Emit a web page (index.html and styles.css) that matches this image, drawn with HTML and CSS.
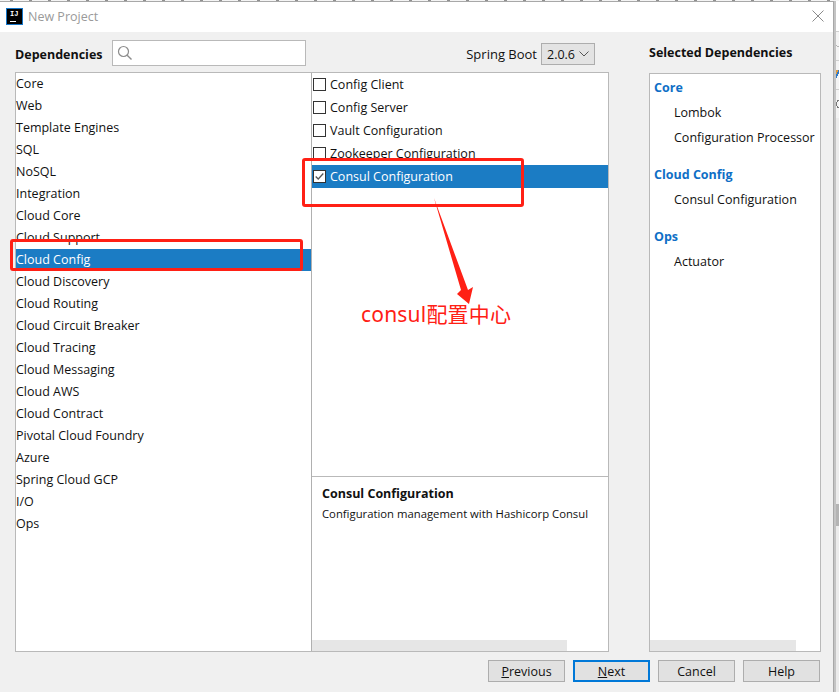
FILE: index.html
```html
<!DOCTYPE html>
<html lang="en">
<head>
<meta charset="utf-8">
<title>New Project</title>
<link rel="stylesheet" href="styles.css">
</head>
<body>
<div class="page">
  <div class="backdrop-top"></div>
  <div class="stage">
  <div class="window">
    <header class="titlebar">
      <span class="app-icon"><span class="app-icon-text">IJ</span><span class="app-icon-bar"></span></span>
      <span class="title">New Project</span>
      <svg class="close" viewBox="0 0 12 12" width="12" height="12"><path d="M.5.5l11 11M11.5.5l-11 11" stroke="#8a8a8a" fill="none"/></svg>
    </header>
    <div class="content">
      <div class="left">
        <div class="toolbar">
          <span class="bold">Dependencies</span>
          <span class="search">
            <svg viewBox="0 0 16 16" width="16" height="16"><circle cx="6.500" cy="6.500" r="5" stroke="#8c8c8c" stroke-width="1.200" fill="none"/><path d="M10.200 10.200l4.300 4.300" stroke="#8c8c8c" stroke-width="1.400"/></svg>
          </span>
          <span class="boot-label">Spring Boot</span>
          <span class="combo">2.0.6<svg viewBox="0 0 10 6" width="10" height="6"><path d="M.5.5L5 5 9.500.5" stroke="#555" fill="none"/></svg></span>
        </div>
        <div class="panel">
          <ul class="cats">
            <li>Core</li><li>Web</li><li>Template Engines</li><li>SQL</li><li>NoSQL</li><li>Integration</li><li>Cloud Core</li><li>Cloud Support</li>
            <li class="sel">Cloud Config</li>
            <li>Cloud Discovery</li><li>Cloud Routing</li><li>Cloud Circuit Breaker</li><li>Cloud Tracing</li><li>Cloud Messaging</li><li>Cloud AWS</li><li>Cloud Contract</li><li>Pivotal Cloud Foundry</li><li>Azure</li><li>Spring Cloud GCP</li><li>I/O</li><li>Ops</li>
          </ul>
          <div class="mid">
            <ul class="deps">
              <li><span class="cb"></span>Config Client</li>
              <li><span class="cb"></span>Config Server</li>
              <li><span class="cb"></span>Vault Configuration</li>
              <li><span class="cb"></span>Zookeeper Configuration</li>
              <li class="sel"><span class="cb on"><svg viewBox="0 0 13 13" width="11" height="11"><path d="M2 6.500l3 3 6-6.500" stroke="#555" stroke-width="1.500" fill="none"/></svg></span>Consul Configuration</li>
            </ul>
            <div class="desc">
              <div class="bold">Consul Configuration</div>
              <div class="desc-text">Configuration management with Hashicorp Consul</div>
            </div>
            <div class="scroll"><span class="thumb mid-thumb"></span></div>
          </div>
        </div>
      </div>
      <aside class="right">
        <div class="bold sel-title">Selected Dependencies</div>
        <div class="sel-panel">
          <div class="sel-body">
            <div class="group">Core</div>
            <div class="item">Lombok</div>
            <div class="item">Configuration Processor</div>
            <div class="group">Cloud Config</div>
            <div class="item">Consul Configuration</div>
            <div class="group">Ops</div>
            <div class="item">Actuator</div>
          </div>
          <div class="scroll"><span class="thumb right-thumb"></span></div>
        </div>
      </aside>
    </div>
    <footer class="footer">
      <button class="btn"><u>P</u>revious</button>
      <button class="btn primary"><u>N</u>ext</button>
      <button class="btn">Cancel</button>
      <button class="btn">Help</button>
    </footer>
  </div>
  <div class="strip">
    <div class="strip-top"></div>
    <div class="strip-row"><svg viewBox="0 0 6 6" width="6" height="6"><path d="M0 1l4 4 4-4" stroke="#777" fill="none"/></svg></div>
    <div class="strip-row strip-v"></div>
    <div class="strip-row strip-c"></div>
    <div class="strip-fill"></div>
    <div class="strip-thumb"></div>
    <div class="strip-rest"></div>
  </div>
  </div>
  <div class="mark mark-cat"></div>
  <div class="mark mark-dep"></div>
  <svg class="arrow" viewBox="0 0 50 112" width="50" height="112"><path d="M3 1L30 93 26 97 38 107 42 90 37 93Z" fill="#ff2015"/></svg>
  <div class="note">consul配置中心</div>
</div>
</body>
</html>
```
FILE: styles.css
```css
* { box-sizing: border-box; }
html, body { margin: 0; padding: 0; }
body { font-family: "Open Sans", "Noto Sans", sans-serif; font-size: 12.5px; color: #111; background: #f0f0f0; }
.page { position: relative; width: 839px; height: 692px; overflow: hidden; background: #f4f4f4; display: flex; flex-direction: column; }
.backdrop-top { height: 1px; flex: none; background: repeating-linear-gradient(90deg, #f4f4f4 0 10px, #8f8f8f 10px 13px, #f4f4f4 13px 19px); }
.stage { flex: 1; display: flex; min-height: 0; }
.window { width: 834px; height: 691px; flex: none; border-top: 1px solid #a8a8a8; border-right: 1px solid #a8a8a8; background: #f0f0f0; display: flex; flex-direction: column; }
.titlebar { height: 30px; background: #fff; display: flex; align-items: center; padding: 0 2px 0 7px; flex: none; }
.app-icon { position: relative; width: 15px; height: 15px; background: #000; outline: 1px solid #1676c8; margin-right: 6px; margin-top: -2px; flex: none; }
.app-icon-text { position: absolute; left: 3px; top: 1px; color: #fff; font: bold 7px/9px "Liberation Mono", monospace; }
.app-icon-bar { position: absolute; left: 3px; bottom: 2px; width: 6px; height: 1px; background: #fff; }
.title { color: #9a9a9a; flex: 1; margin-top: -2px; }
.close { margin-right: 7px; margin-top: -2px; }
.content { display: flex; height: 619px; flex: none; }
.left { width: 627px; padding-left: 15px; flex: none; }
.toolbar { height: 40px; display: flex; align-items: center; padding-top: 4px; }
.bold { font-weight: 700; }
.search { width: 194px; height: 26px; border: 1px solid #b9b9b9; background: #fff; margin-left: 9px; display: flex; align-items: center; padding-left: 4px; margin-top: -2px; }
.boot-label { margin-left: auto; margin-right: 4px; font-size: 13px; }
.combo { width: 54px; height: 22px; border: 1px solid #adadad; background: #e3e3e3; display: flex; align-items: center; justify-content: space-between; padding: 0 5px; margin-right: 32px; }
.panel { width: 594px; height: 580px; border: 1px solid #b9b9b9; background: #fff; display: flex; }
ul { list-style: none; margin: 0; padding: 0; }
.cats { width: 296px; flex: none; border-right: 1px solid #b0b0b0; }
.cats li { height: 22px; line-height: 21px; white-space: nowrap; }
.sel { background: #1b7cc4; color: #fff; }
.mid { flex: 1; display: flex; flex-direction: column; min-width: 0; }
.deps { height: 403px; flex: none; }
.deps li { height: 23px; display: flex; align-items: center; white-space: nowrap; }
.cb { width: 13px; height: 13px; border: 1px solid #333; background: #fff; margin: 0 4px 0 1px; display: flex; align-items: center; justify-content: center; flex: none; }
.desc { flex: 1; border-top: 1px solid #b9b9b9; padding: 7px 10px; }
.desc .bold { line-height: 20px; }
.desc-text { font-size: 11.300px; line-height: 20px; }
.scroll { height: 11px; background: #fff; flex: none; }
.thumb { display: block; height: 11px; background: #e6e6e6; }
.mid-thumb { width: 255px; }
.right-thumb { width: 146px; }
.right { flex: 1; padding-left: 22px; }
.sel-title { height: 41px; padding-top: 12px; line-height: 18px; }
.sel-panel { width: 172px; height: 579px; border: 1px solid #b9b9b9; background: #fff; display: flex; flex-direction: column; }
.sel-body { flex: 1; padding: 0 0 0 4px; }
.group { color: #0f6fc6; font-weight: 700; height: 25px; line-height: 27px; }
.item { height: 25px; line-height: 27px; padding-left: 20px; white-space: nowrap; }
.item + .group { margin-top: 12px; }
.footer { flex: 1; display: flex; justify-content: flex-end; gap: 8px; padding: 9px 13px 0 0; }
.btn { width: 77px; height: 22px; border: 1px solid #adadad; background: #e1e1e1; font: 12.5px "Open Sans", "Noto Sans", sans-serif; color: #111; padding: 0; }
.primary { border: 2px solid #0078d7; }
.strip { flex: 1; display: flex; flex-direction: column; min-width: 0; background: #f4f4f4; border-left: 2px solid #c4c4c4; }
.strip-top { height: 30px; flex: none; background: #fff; }
.strip-row { height: 29px; flex: none; border-top: 1px solid #cfcfcf; display: flex; align-items: center; overflow: hidden; }
.strip-v { background: linear-gradient(115deg, #e39a3a 0 2px, #2f78c4 2px 4px, #f4f4f4 4px); background-size: 4px 10px; background-repeat: no-repeat; background-position: 0 center; }
.strip-c { background: radial-gradient(circle at 5px 50%, transparent 0 4px, #777 4px 5px, transparent 5px); }
.strip-fill { height: 386px; flex: none; background: #ececec; }
.strip-thumb { height: 22px; flex: none; background: #b4b4b4; }
.strip-rest { flex: 1; background: #ececec; }
.mark { position: absolute; border: 3px solid #ff2015; border-radius: 3px; }
.mark-cat { left: 10px; top: 239px; width: 293px; height: 32px; }
.mark-dep { left: 302px; top: 158px; width: 222px; height: 49px; }
.arrow { position: absolute; left: 431px; top: 197px; }
.note { position: absolute; left: 361px; top: 301px; color: #ff2015; font: 21px/26px "Noto Sans", "Noto Sans CJK SC", sans-serif; letter-spacing: .2px; white-space: nowrap; }
```
